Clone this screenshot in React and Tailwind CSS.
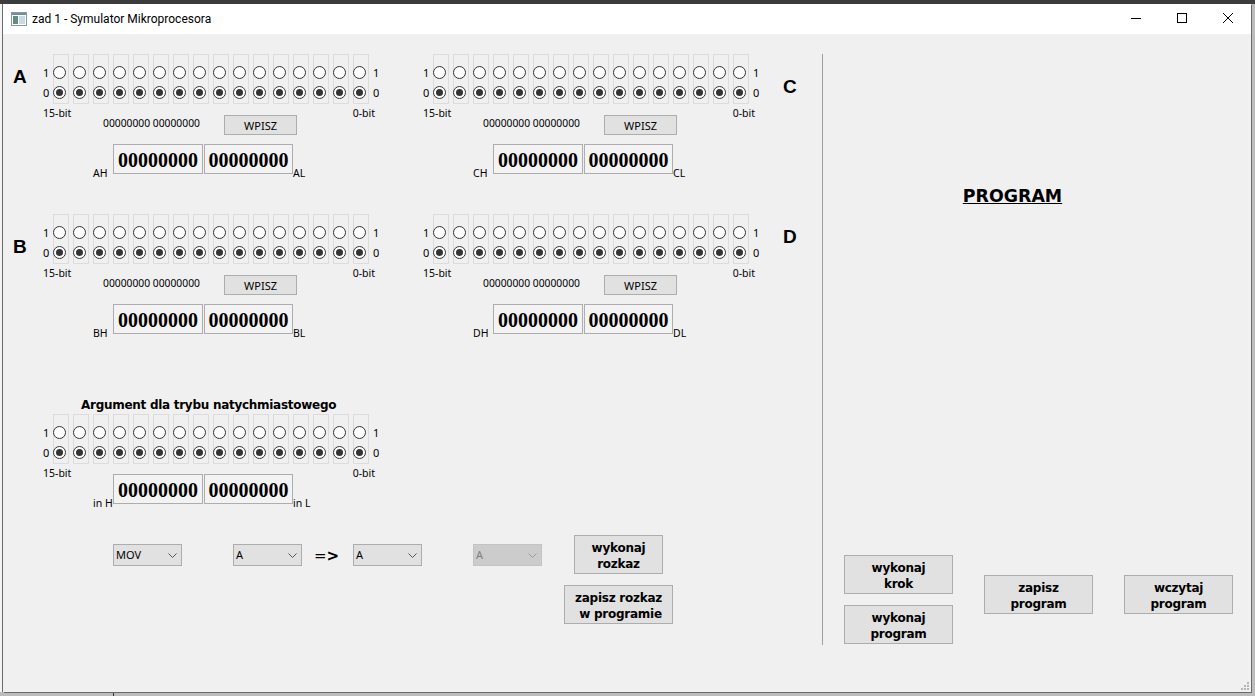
import React from "react";

const ui = { fontFamily: '"Noto Sans", sans-serif' };
const bits = Array.from({ length: 16 }, (_, i) => i);

function Radio({ checked }) {
  return (
    <span className="-ml-[1px] flex h-[13px] w-[13px] items-center justify-center rounded-full border border-[#333] bg-white">
      {checked && <span className="h-[7px] w-[7px] rounded-full bg-[#333]" />}
    </span>
  );
}

function Bits() {
  return (
    <div className="flex h-[50px] text-[11px] leading-none text-black">
      <div className="flex w-[10px] flex-col pt-[13px]">
        <span className="h-[20px]">1</span>
        <span>0</span>
      </div>
      <div className="flex gap-[4px]">
        {bits.map((b) => (
          <div key={b} className="flex w-[16px] flex-col items-start gap-[7px] border border-[#dcdcdc] pt-[11px]">
            <Radio />
            <Radio checked />
          </div>
        ))}
      </div>
      <div className="flex flex-col pl-[4px] pt-[13px]">
        <span className="h-[20px]">1</span>
        <span>0</span>
      </div>
    </div>
  );
}

function BigValue({ left, right }) {
  return (
    <div className="flex items-end text-[10.5px] leading-none">
      <span className="-mb-[4px] w-[70px] pl-[50px] whitespace-nowrap">{left}</span>
      <div className="flex gap-[1px] font-['Liberation_Serif',serif] text-[20px] font-bold">
        <div className="flex h-[30px] w-[90px] items-center justify-center border border-[#adadad] bg-[#f3f3f3] pt-[1px]">00000000</div>
        <div className="flex h-[30px] w-[89px] items-center justify-center border border-[#adadad] bg-[#f3f3f3] pt-[1px]">00000000</div>
      </div>
      <span className="-mb-[4px] whitespace-nowrap">{right}</span>
    </div>
  );
}

function Register({ hi, lo, write = true }) {
  return (
    <div className="flex flex-col">
      <Bits />
      <div className="flex h-[14px] w-[332px] justify-between pt-[4px] text-[10.5px] leading-[11px]">
        <span>15-bit</span>
        <span>0-bit</span>
      </div>
      {write && (
        <div className="-mt-[3px] flex h-[20px] items-center text-[11px] leading-none">
          <span className="w-[181px] pb-[4px] pl-[60px] text-[10.3px] whitespace-nowrap">00000000 00000000</span>
          <button className="h-[20px] w-[73px] border border-[#adadad] bg-[#e1e1e1]">WPISZ</button>
        </div>
      )}
      <div className={write ? "pt-[9px]" : "-mt-[4px]"}>
        <BigValue left={hi} right={lo} />
      </div>
    </div>
  );
}

function Select({ value, disabled }) {
  return (
    <div className={`flex h-[22px] w-[69px] items-center justify-between border pl-[2px] pr-[4px] text-[11px] ${disabled ? "border-[#c4c4c4] bg-[#cccccc] text-[#7f7f7f]" : "border-[#adadad] bg-[#e1e1e1] text-black"}`}>
      <span>{value}</span>
      <svg width="9" height="5" viewBox="0 0 9 5" fill="none" stroke={disabled ? "#9a9a9a" : "#555"}>
        <path d="M.5.5l4 4 4-4" />
      </svg>
    </div>
  );
}

function ActionButton({ children, wide = true }) {
  return (
    <button className={`h-[39px] ${wide ? "w-[109px]" : "w-[89px]"} border border-[#adadad] bg-[#e1e1e1] pt-[2px] font-['DejaVu_Sans',sans-serif] text-[12px] leading-[16px] font-bold tracking-[-0.25px] text-black`}>
      {children}
    </button>
  );
}

function Letter({ children, top }) {
  return <div className={`w-[30px] font-['Liberation_Sans',sans-serif] text-[19px] leading-none font-bold ${top}`}>{children}</div>;
}

export default function App() {
  return (
    <div style={ui} className="relative flex h-[696px] w-[1255px] flex-col overflow-hidden bg-[#bcbcbc]">
      <div className="h-[4px] shrink-0 bg-[#3c3c3c]" />
      <div className="flex flex-1 pr-[4px] pb-[4px]">
        <div className="w-[3px] shrink-0 border-r border-[#6a6a6a] bg-[#f4f4f4]" />
        <div className="relative flex flex-1 flex-col bg-[#f0f0f0] shadow-[1px_1px_0_0_#6a6a6a]">
          {/* title bar */}
          <div className="flex h-[30px] shrink-0 items-center bg-white pl-[8px] font-['Roboto',sans-serif] text-[12px] text-black">
            <svg width="16" height="14" viewBox="0 0 16 14" className="mr-[5px]">
              <rect x=".5" y=".5" width="15" height="13" fill="#fff" stroke="#8a9aa0" />
              <rect x="1" y="1" width="14" height="2" fill="#6f8f9f" />
              <rect x="2" y="4" width="5" height="8" fill="#5f8f7f" />
              <rect x="8" y="4" width="6" height="8" fill="#c9d9e4" />
            </svg>
            <span>zad 1 - Symulator Mikroprocesora</span>
            <div className="ml-auto flex items-center">
              <svg width="46" height="30" viewBox="0 0 46 30" stroke="#000" fill="none"><path d="M18 14.5h10" /></svg>
              <svg width="46" height="30" viewBox="0 0 46 30" stroke="#000" fill="none"><rect x="18.500" y="9.500" width="9" height="9" /></svg>
              <svg width="46" height="30" viewBox="0 0 46 30" stroke="#000" fill="none"><path d="M18 9l10 10M28 9L18 19" /></svg>
            </div>
          </div>

          <div className="flex flex-1 pt-[20px]">
            {/* registers */}
            <div className="flex w-[819px] shrink-0 flex-col pl-[10px]">
              <div className="flex h-[160px]">
                <Letter top="pt-[13px]">A</Letter>
                <div className="w-[380px]"><Register hi="AH" lo="AL" /></div>
                <div className="w-[360px]"><Register hi="CH" lo="CL" /></div>
                <Letter top="pt-[23px]">C</Letter>
              </div>
              <div className="flex h-[160px]">
                <Letter top="pt-[23px]">B</Letter>
                <div className="w-[380px]"><Register hi="BH" lo="BL" /></div>
                <div className="w-[360px]"><Register hi="DH" lo="DL" /></div>
                <Letter top="pt-[13px]">D</Letter>
              </div>
              <div className="pt-[23px] pl-[68px] font-['DejaVu_Sans',sans-serif] text-[12px] leading-[16px] font-bold tracking-[-0.28px]">Argument dla trybu natychmiastowego</div>
              <div className="pt-[1px] pl-[30px]"><Register hi="in H" lo="in L" write={false} /></div>
              <div className="flex items-start pt-[31px] pl-[100px]">
                <div className="pt-[9px]"><Select value="MOV" /></div>
                <div className="pt-[9px] pl-[51px]"><Select value="A" /></div>
                <div className="w-[51px] pr-[2px] pt-[10px] text-center font-['DejaVu_Sans',sans-serif] text-[15px] leading-[22px] font-bold"><span className="font-normal">=</span>&gt;</div>
                <div className="pt-[9px]"><Select value="A" /></div>
                <div className="pt-[9px] pl-[51px]"><Select value="A" disabled /></div>
                <div className="flex flex-col items-center gap-[11px] pl-[22px]">
                  <ActionButton wide={false}>wykonaj<br />rozkaz</ActionButton>
                  <ActionButton>zapisz rozkaz<br />&nbsp;w programie</ActionButton>
                </div>
              </div>
            </div>

            {/* program */}
            <div className="flex h-[591px] flex-1 flex-col border-l border-[#a0a0a0] pb-[1px]">
              <div className="w-[379px] pt-[130px] text-center font-['DejaVu_Sans',sans-serif] text-[17.4px] leading-[24px] font-bold underline">PROGRAM</div>
              <div className="mt-auto flex items-start gap-[31px] pl-[21px]">
                <div className="flex flex-col gap-[11px]">
                  <ActionButton>wykonaj<br />krok</ActionButton>
                  <ActionButton>wykonaj<br />program</ActionButton>
                </div>
                <div className="pt-[20px]"><ActionButton>zapisz<br />program</ActionButton></div>
                <div className="pt-[20px]"><ActionButton>wczytaj<br />program</ActionButton></div>
              </div>
            </div>
          </div>

          {/* size grip */}
          <svg width="8" height="8" viewBox="0 0 8 8" fill="#b5b5b5" className="absolute right-[2px] bottom-[2px]">
            <rect x="6" y="0" width="2" height="2" />
            <rect x="3" y="3" width="2" height="2" />
            <rect x="6" y="3" width="2" height="2" />
            <rect x="0" y="6" width="2" height="2" />
            <rect x="3" y="6" width="2" height="2" />
            <rect x="6" y="6" width="2" height="2" />
          </svg>
        </div>
      </div>
      {/* line of the window behind, shows under this one */}
      <div className="absolute bottom-0 left-[113px] h-[3px] w-px bg-[#333]" />
    </div>
  );
}
